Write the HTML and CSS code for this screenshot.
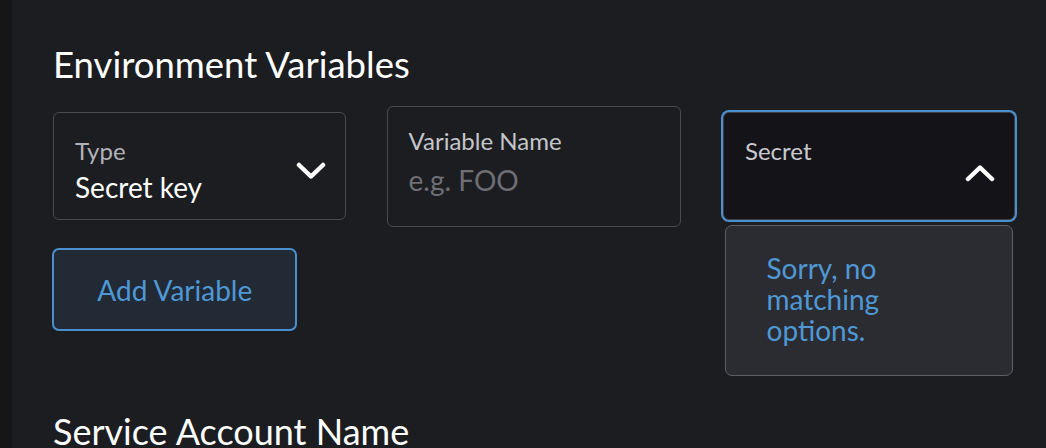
FILE: index.html
```html
<!DOCTYPE html>
<html lang="en">
<head>
<meta charset="utf-8">
<link rel="stylesheet" href="styles.css">
</head>
<body>
<div class="page">
  <aside class="strip"></aside>
  <main class="content">
    <h2 class="heading">Environment Variables</h2>
    <div class="fields">
      <div class="field select">
        <div class="field-text">
          <div class="label">Type</div>
          <div class="value">Secret key</div>
        </div>
        <svg class="chev" viewBox="0 0 30 18" width="30" height="18"><path d="M3 3 L15 14.5 L27 3" fill="none" stroke="#fff" stroke-width="4.5" stroke-linecap="round" stroke-linejoin="round"/></svg>
      </div>
      <div class="field input">
        <div class="label">Variable Name</div>
        <div class="placeholder">e.g. FOO</div>
      </div>
      <div class="field-wrap">
        <div class="field select focused">
          <div class="field-text">
            <div class="label top">Secret</div>
          </div>
          <svg class="chev up" viewBox="0 0 30 18" width="30" height="18"><path d="M3 15 L15 3.5 L27 15" fill="none" stroke="#fff" stroke-width="4.5" stroke-linecap="round" stroke-linejoin="round"/></svg>
        </div>
        <div class="menu">
          <p class="menu-msg">Sorry, no matching options.</p>
        </div>
      </div>
    </div>
    <button class="add-btn">Add Variable</button>
    <h2 class="heading second">Service Account Name</h2>
  </main>
</div>
</body>
</html>
```
FILE: styles.css
```css
* { box-sizing: border-box; }
html, body { margin: 0; padding: 0; }
body {
  background: #1c1d21;
  font-family: Lato, "Open Sans", sans-serif;
  color: #fff;
  overflow: hidden;
  width: 1046px;
  height: 448px;
}
.page {
  display: flex;
  height: 448px;
}
.strip {
  width: 12px;
  flex: none;
  background: #161619;
}
.content {
  flex: 1;
  padding: 0 0 0 41px;
}
.heading {
  margin: 0;
  padding-top: 42px;
  font-size: 36.5px;
  font-weight: 400;
  line-height: 44px;
  color: #fff;
}
.fields {
  display: grid;
  grid-template-columns: 293px 294px 293px;
  column-gap: 41px;
  align-items: center;
  margin-top: 20px;
  width: 970px;
}
.field {
  border: 1.5px solid #4a4b50;
  border-radius: 6px;
  background: #1c1d21;
}
.select {
  height: 108px;
  display: flex;
  align-items: flex-start;
  justify-content: space-between;
  padding: 24px 19px 0 21px;
}
.field-text {
  display: flex;
  flex-direction: column;
}
.label {
  font-size: 24px;
  line-height: 28px;
  color: #b2b3b9;
}
.value {
  font-size: 28px;
  line-height: 44px;
  color: #fff;
}
.input {
  height: 120.7px;
  padding: 20px 20px 0 20.5px;
}
.input .label { color: #c4c5ca; }
.placeholder {
  margin-top: 8px;
  font-size: 28px;
  line-height: 34px;
  color: #6e6f75;
}
.chev { display: block; flex: none; margin-top: 24.75px; }
.field-wrap {
  position: relative;
  margin-left: 1px;
}
.focused {
  background: #141418;
  border: 1.5px solid #3d3e43;
  box-shadow: 0 0 0 2px #4a90cf;
  padding-top: 24px;
}
.focused .label.top { color: #c9cacf; }
.chev.up { margin-top: 26.5px; }
.menu {
  position: absolute;
  left: 1.5px;
  right: 2px;
  top: 112.3px;
  height: 151px;
  background: #2b2c31;
  border: 1.5px solid #5e5f64;
  border-radius: 7px;
  padding: 27.5px 20px 0 41px;
}
.menu-msg {
  margin: 0;
  font-size: 28px;
  line-height: 31px;
  color: #4f98d6;
  width: 150px;
}
.add-btn {
  display: block;
  margin-top: 21.5px;
  margin-left: -0.7px;
  width: 245px;
  height: 82.7px;
  background: #222a36;
  border: 2px solid #4a90cf;
  border-radius: 7px;
  font-family: Lato, "Open Sans", sans-serif;
  font-size: 28px;
  color: #4f98d6;
  padding: 0;
  cursor: pointer;
}
.heading.second {
  padding-top: 78.6px;
  font-size: 36px;
}
```
